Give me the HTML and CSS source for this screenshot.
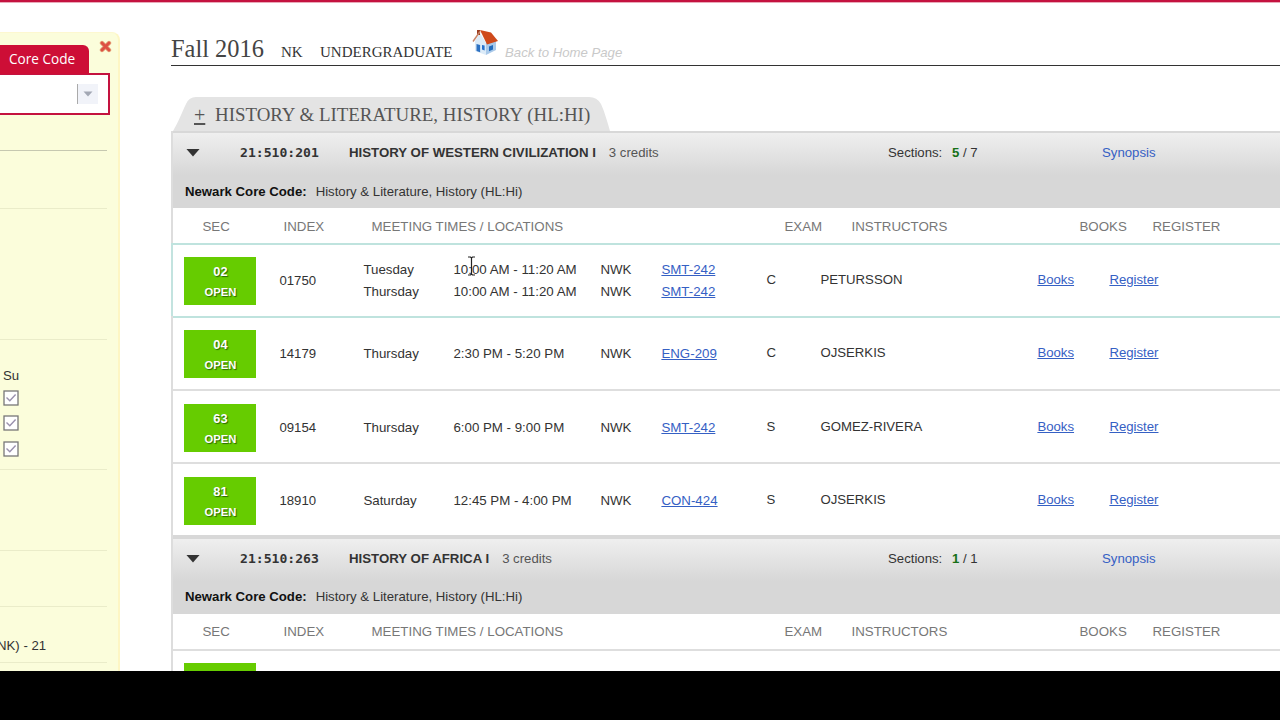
FILE: index.html
```
<!DOCTYPE html>
<html lang="en">
<head>
  <meta charset="UTF-8" />
  <meta name="viewport" content="width=device-width, initial-scale=1.0" />
  <title>Schedule of Classes - Fall 2016</title>
  <link rel="stylesheet" href="styles.css">
</head>
<body>
  <div class="page">
    <aside class="filters">
      <div class="filters-top">
        <div class="filter-tab">Core Code</div>
        <svg class="close" width="13" height="13" viewBox="0 0 13 13">
          <path d="M3 3 L10 10 M10 3 L3 10" stroke="#e4a078" stroke-width="4.4" stroke-linecap="round" />
          <path d="M3 3 L10 10 M10 3 L3 10" stroke="#dd5044" stroke-width="2.8" stroke-linecap="round" />
        </svg>
      </div>
      <div class="core-box">
        <div class="core-select">
          <svg width="10" height="6" viewBox="0 0 10 6"><path d="M0.5 0.5h9L5 5.5z" fill="#a3a8b4" /></svg>
        </div>
      </div>
      <div class="filter-section search"></div>
      <div class="filter-section level"></div>
      <div class="filter-section status"></div>
      <div class="filter-section days">
        <div class="day-name">Su</div>
        <svg class="check" width="16" height="16" viewBox="0 0 16 16"><rect x="1" y="1" width="14" height="14" fill="#fff" stroke="#777" stroke-width="1.3" /><path d="M3.5 7.5l3.3 3.3 5.8-6.3" fill="none" stroke="#9a91ad" stroke-width="1.4" /></svg>
        <svg class="check" width="16" height="16" viewBox="0 0 16 16"><rect x="1" y="1" width="14" height="14" fill="#fff" stroke="#777" stroke-width="1.3" /><path d="M3.5 7.5l3.3 3.3 5.8-6.3" fill="none" stroke="#9a91ad" stroke-width="1.4" /></svg>
        <svg class="check" width="16" height="16" viewBox="0 0 16 16"><rect x="1" y="1" width="14" height="14" fill="#fff" stroke="#777" stroke-width="1.3" /><path d="M3.5 7.5l3.3 3.3 5.8-6.3" fill="none" stroke="#9a91ad" stroke-width="1.4" /></svg>
      </div>
      <div class="filter-section times"></div>
      <div class="filter-section credits"></div>
      <div class="filter-section campus">NK) - 21</div>
    </aside>

    <main class="content">
      <header class="title-bar">
        <h1>Fall 2016</h1>
        <span class="campus-code">NK</span>
        <span class="level-name">UNDERGRADUATE</span>
        <svg class="home" width="26" height="27" viewBox="0 0 26 27">
          <path d="M3 12 L8 4 L14 14 L14 26 L3 22z" fill="#dcebf8" />
          <path d="M14 14 L24 11 V21 L14 26z" fill="#a9c9e9" />
          <path d="M5 1h3v5H5z" fill="#9b3d22" />
          <path d="M8 1 L19 3.5 L26 12 L15 15.5z" fill="#cf4a1c" />
          <path d="M8 2.5 L1 12.5" stroke="#c98568" stroke-width="1.4" />
          <path d="M4.5 15l3.6 .9v7.3l-3.6-1.3z" fill="#2d71c2" />
          <path d="M10 16l2.6 .6v4.8l-2.6-.8z" fill="#2671ce" />
          <path d="M17 17.4l4-1.4v4.5l-4 1.7z" fill="#226bbd" />
        </svg>
        <a class="home-link">Back to Home Page</a>
      </header>

      <div class="subject-tab">
        <svg class="tab-shape" width="440" height="34" viewBox="0 0 440 34"><path d="M2 34 C8 24 11 15 15 7 Q18 0 25 0 H418 Q426 0 430 7 C434 16 436 24 439 34z" fill="#e4e4e4" /></svg>
        <span class="plus">+</span>
        <h2>HISTORY &amp; LITERATURE, HISTORY (HL:HI)</h2>
      </div>

      <section class="course">
        <div class="course-head">
          <div class="course-line">
            <span class="arrow"></span>
            <span class="course-code">21:510:201</span>
            <span class="course-name"><b>HISTORY OF WESTERN CIVILIZATION I</b><span class="credits-text">3 credits</span></span>
            <span class="sections">Sections: <b>5</b> / 7</span>
            <a class="synopsis">Synopsis</a>
          </div>
          <div class="core-line"><b>Newark Core Code:</b><span>History &amp; Literature, History (HL:Hi)</span></div>
        </div>
        <div class="columns">
          <span>SEC</span><span>INDEX</span><span>MEETING TIMES / LOCATIONS</span><span>EXAM</span><span>INSTRUCTORS</span><span>BOOKS</span><span>REGISTER</span>
        </div>
        <div class="section-row active">
          <div class="badge"><span>02</span><span class="state">OPEN</span></div>
          <span class="index">01750</span>
          <div class="meetings">
            <div class="meeting"><span>Tuesday</span><span>10:00 AM - 11:20 AM</span><span>NWK</span><a>SMT-242</a></div>
            <div class="meeting"><span>Thursday</span><span>10:00 AM - 11:20 AM</span><span>NWK</span><a>SMT-242</a></div>
          </div>
          <span class="up">C</span><span class="up">PETURSSON</span><a class="up">Books</a><a class="up">Register</a>
        </div>
        <div class="section-row">
          <div class="badge"><span>04</span><span class="state">OPEN</span></div>
          <span class="index">14179</span>
          <div class="meetings">
            <div class="meeting"><span>Thursday</span><span>2:30 PM - 5:20 PM</span><span>NWK</span><a>ENG-209</a></div>
          </div>
          <span class="up">C</span><span class="up">OJSERKIS</span><a class="up">Books</a><a class="up">Register</a>
        </div>
        <div class="section-row low">
          <div class="badge"><span>63</span><span class="state">OPEN</span></div>
          <span class="index">09154</span>
          <div class="meetings">
            <div class="meeting"><span>Thursday</span><span>6:00 PM - 9:00 PM</span><span>NWK</span><a>SMT-242</a></div>
          </div>
          <span class="up">S</span><span class="up">GOMEZ-RIVERA</span><a class="up">Books</a><a class="up">Register</a>
        </div>
        <div class="section-row low">
          <div class="badge"><span>81</span><span class="state">OPEN</span></div>
          <span class="index">18910</span>
          <div class="meetings">
            <div class="meeting"><span>Saturday</span><span>12:45 PM - 4:00 PM</span><span>NWK</span><a>CON-424</a></div>
          </div>
          <span class="up">S</span><span class="up">OJSERKIS</span><a class="up">Books</a><a class="up">Register</a>
        </div>
      </section>

      <section class="course">
        <div class="course-head">
          <div class="course-line">
            <span class="arrow"></span>
            <span class="course-code">21:510:263</span>
            <span class="course-name"><b>HISTORY OF AFRICA I</b><span class="credits-text">3 credits</span></span>
            <span class="sections">Sections: <b>1</b> / 1</span>
            <a class="synopsis">Synopsis</a>
          </div>
          <div class="core-line"><b>Newark Core Code:</b><span>History &amp; Literature, History (HL:Hi)</span></div>
        </div>
        <div class="columns">
          <span>SEC</span><span>INDEX</span><span>MEETING TIMES / LOCATIONS</span><span>EXAM</span><span>INSTRUCTORS</span><span>BOOKS</span><span>REGISTER</span>
        </div>
        <div class="section-row">
          <div class="badge"></div>
        </div>
      </section>
    </main>

    <!-- text cursor over the first meeting time -->
    <svg class="cursor" width="9" height="20" viewBox="0 0 9 20"><path d="M1 1h2.5l1 1 1-1H8M4.5 2v16M1 19h2.5l1-1 1 1H8" fill="none" stroke="#222" stroke-width="1.2" /></svg>
  </div>
</body>
</html>
```
FILE: styles.css
```
* {
  box-sizing: border-box;
}

body {
  margin: 0;
  height: 720px;
  overflow: hidden;
  background-color: #000;
  font-family: "Liberation Sans", Arial, sans-serif;
  font-size: 13.2px;
  color: #333;
}

svg {
  display: block;
}

.page {
  position: relative;
  display: flex;
  height: 671px;
  overflow: hidden;
  background-color: #fff;
  border-top: 2px solid #c4123f;
  box-shadow: inset 0 1px #e9a9b8;
}

/* filter sidebar */
.filters {
  width: 120px;
  height: 660px;
  margin-top: 30px;
  flex-shrink: 0;
  background-color: #fbfddb;
  border-right: 2px solid #fdf6c4;
  border-top: 1px solid #fdf8d0;
  border-radius: 0 8px 0 0;
}

.filters-top {
  display: flex;
  height: 40px;
  padding-top: 12px;
}

.filter-tab {
  width: 89px;
  height: 29px;
  padding-left: 9px;
  background-color: #cd0e36;
  border-radius: 0 6px 0 0;
  color: #fff;
  font-family: "Open Sans", sans-serif;
  font-size: 13.6px;
  line-height: 27px;
  white-space: nowrap;
}

.close {
  margin: -5px 0 0 10px;
}

.core-box {
  width: 110px;
  height: 42px;
  padding: 9px 10px 9px 0;
  background-color: #fff;
  border: 2px solid #c4123f;
  border-left: none;
  display: flex;
  justify-content: flex-end;
}

.core-select {
  width: 21px;
  height: 20px;
  background-color: #f1f3f9;
  border-left: 1px solid #aaa;
  display: flex;
  align-items: center;
  justify-content: center;
}

.filter-section {
  width: 107px;
  border-bottom: 1px solid #eaecc9;
}

.search {
  height: 36px;
  border-color: #c6c8b0;
}

.level {
  height: 58px;
}

.status {
  height: 131px;
}

.days {
  height: 130px;
  padding: 27px 0 0 3px;
}

.day-name {
  height: 23px;
  line-height: 17px;
}

.check {
  margin-bottom: 9.4px;
}

.times {
  height: 81px;
}

.credits {
  height: 56px;
}

.campus {
  height: 56px;
  padding-top: 31px;
  text-indent: -3px;
}

/* page title */
.content {
  flex: 1;
  margin-left: 51px;
}

.title-bar {
  display: flex;
  align-items: baseline;
  height: 64px;
  border-bottom: 1.5px solid #333;
  font-family: "Liberation Serif", serif;
  color: #333;
  line-height: 30px;
  padding-top: 32px;
}

h1 {
  width: 110px;
  margin: 0;
  font-size: 24.4px;
  font-weight: normal;
  white-space: nowrap;
  color: #444;
}

.campus-code {
  width: 39px;
  font-size: 15px;
}

.level-name {
  width: 152px;
  font-size: 15px;
}

.home {
  align-self: flex-start;
  margin-top: -5px;
}

.home-link {
  margin-left: 7px;
  font-family: "Liberation Sans", Arial, sans-serif;
  font-size: 13.2px;
  font-style: italic;
  color: #c9c9c9;
}

.subject-tab {
  position: relative;
  display: flex;
  align-items: center;
  height: 34px;
  margin-top: 31px;
  padding-left: 23px;
}

.tab-shape {
  position: absolute;
  left: 0;
  top: 0;
}

.plus {
  position: relative;
  width: 21px;
  padding-top: 3px;
  font-family: "Liberation Serif", serif;
  font-size: 20px;
  color: #555;
  text-decoration: underline;
}

h2 {
  position: relative;
  margin: 0;
  padding-top: 2px;
  font-family: "Liberation Serif", serif;
  font-size: 18.9px;
  font-weight: normal;
  white-space: nowrap;
  color: #555;
}

/* courses */
.course {
  border-left: 2px solid #ddd;
}

.course-head {
  height: 77px;
  border-top: 2px solid #d8d8d8;
  background: linear-gradient(#efefef, #d7d7d7 42px);
}

.course + .course .course-head {
  height: 79px;
  border-top-width: 4px;
}

.course + .course .core-line {
  line-height: 38px;
}

.course + .course .columns {
  line-height: 35px;
}

.course-line {
  display: grid;
  grid-template-columns: 54px 109px 539px 214px 1fr;
  align-items: center;
  height: 39px;
  padding-left: 13px;
  white-space: nowrap;
}

.arrow {
  width: 14px;
  height: 8px;
  background-color: #333;
  clip-path: polygon(0 0, 100% 0, 50% 100%);
}

.course-code {
  font-family: "DejaVu Sans Mono", monospace;
  font-size: 13.1px;
  font-weight: bold;
}

.course-name b {
  font-size: 13.25px;
}

.credits-text {
  margin-left: 13px;
  color: #555;
}

.sections b {
  margin-left: 6px;
  color: #167016;
}

.core-line {
  padding-left: 12px;
  line-height: 40px;
  height: 36px;
}

.core-line b {
  color: #111;
  margin-right: 9px;
}

.columns {
  display: grid;
  grid-template-columns: 81px 88px 413px 67px 228px 73px 1fr;
  height: 35px;
  padding-left: 29.5px;
  line-height: 37px;
  color: #777;
  font-size: 13.3px;
}

.section-row {
  display: grid;
  grid-template-columns: 95px 84px 403px 54px 217px 72px 1fr;
  align-items: center;
  height: 73px;
  padding-left: 11.4px;
  border-top: 2px solid #dedede;
}

.section-row.active {
  margin-left: -2px;
  border-left: 2px solid #c3e3df;
  border-top-color: #bfe3de;
}

.active + .section-row {
  border-top-color: #bfe3de;
}

.section-row.low {
  padding-top: 2px;
}

.badge {
  width: 72px;
  height: 48px;
  padding-top: 5px;
  background-color: #66cc00;
  color: #fff;
  font-size: 12.8px;
  font-weight: bold;
  line-height: 20px;
  text-align: center;
  text-shadow: 1px 1px 1px #2b6600;
}

.badge span {
  display: block;
}

.badge .state {
  font-size: 11.2px;
}

.meeting {
  display: grid;
  grid-template-columns: 90px 147px 61px 1fr;
  line-height: 21.6px;
  font-size: 13.3px;
}

.section-row a {
  color: #3560c4;
  text-decoration: underline;
}

.section-row .up {
  padding-bottom: 2px;
}

.synopsis {
  color: #3560c4;
}

.cursor {
  position: absolute;
  left: 467px;
  top: 254px;
}
```
